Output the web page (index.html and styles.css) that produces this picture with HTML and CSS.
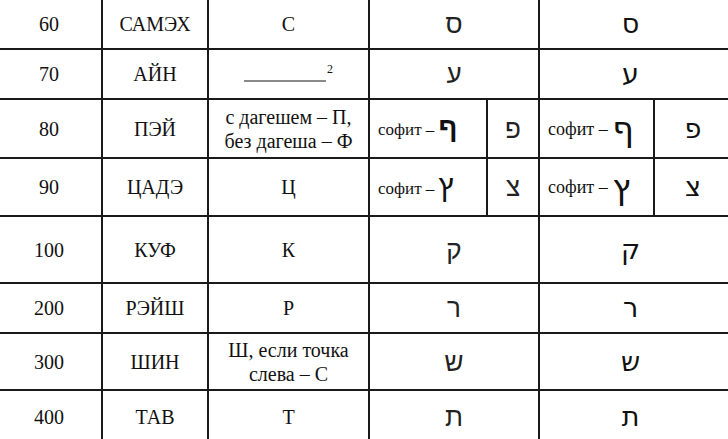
FILE: index.html
```html
<!DOCTYPE html>
<html lang="ru">
<head>
<meta charset="utf-8">
<title>Таблица букв</title>
<link rel="stylesheet" href="styles.css">
</head>
<body>
<table class="letters">
  <colgroup>
    <col class="c-num"><col class="c-name"><col class="c-ru"><col class="c-he-a"><col class="c-he-b"><col class="c-cu-a"><col class="c-cu-b">
  </colgroup>
  <tbody>
    <tr class="r1">
      <td>60</td><td>САМЭХ</td><td>С</td>
      <td colspan="2" class="he" lang="he">ס</td>
      <td colspan="2" class="cu wide" lang="he">ס</td>
    </tr>
    <tr class="r2">
      <td>70</td><td>АЙН</td>
      <td><span class="blank"></span><sup class="note">2</sup></td>
      <td colspan="2" class="he" lang="he">ע</td>
      <td colspan="2" class="cu wide" lang="he">ע</td>
    </tr>
    <tr class="r3">
      <td>80</td><td>ПЭЙ</td>
      <td class="two">с дагешем – П,<br>без дагеша – Ф</td>
      <td class="sofit">софит – <span class="he-big" lang="he">ף</span></td>
      <td class="he" lang="he">פ</td>
      <td class="sofit cs">софит – <span class="cu-big" lang="he">ף</span></td>
      <td class="cu" lang="he">פ</td>
    </tr>
    <tr class="r4">
      <td>90</td><td>ЦАДЭ</td><td>Ц</td>
      <td class="sofit">софит – <span class="he-big thin" lang="he">ץ</span></td>
      <td class="he" lang="he">צ</td>
      <td class="sofit cs">софит – <span class="cu-big" lang="he">ץ</span></td>
      <td class="cu" lang="he">צ</td>
    </tr>
    <tr class="r5">
      <td>100</td><td>КУФ</td><td>К</td>
      <td colspan="2" class="he" lang="he">ק</td>
      <td colspan="2" class="cu wide" lang="he">ק</td>
    </tr>
    <tr class="r6">
      <td>200</td><td>РЭЙШ</td><td>Р</td>
      <td colspan="2" class="he" lang="he">ר</td>
      <td colspan="2" class="cu wide" lang="he">ר</td>
    </tr>
    <tr class="r7">
      <td>300</td><td>ШИН</td>
      <td class="two">Ш, если точка<br>слева – С</td>
      <td colspan="2" class="he" lang="he">ש</td>
      <td colspan="2" class="cu wide" lang="he">ש</td>
    </tr>
    <tr class="r8">
      <td>400</td><td>ТАВ</td><td>Т</td>
      <td colspan="2" class="he" lang="he">ת</td>
      <td colspan="2" class="cu wide" lang="he">ת</td>
    </tr>
  </tbody>
</table>
</body>
</html>
```

FILE: styles.css
```css
html, body {
  margin: 0;
  padding: 0;
  background: #fff;
  overflow: hidden;
}

.letters {
  border-collapse: collapse;
  table-layout: fixed;
  width: 736px;
  margin: -2px 0 0 -5px;
  font-family: "Liberation Serif", "Times New Roman", serif;
  font-size: 20px;
  color: #111;
}

.c-num { width: 106px; }
.c-name { width: 106px; }
.c-ru { width: 161px; }
.c-he-a { width: 118px; }
.c-he-b { width: 52px; }
.c-cu-a { width: 115px; }
.c-cu-b { width: 78px; }

.letters td {
  border: 2px solid #1a1a1a;
  text-align: center;
  vertical-align: middle;
  padding: 0;
  line-height: 24px;
  white-space: nowrap;
}

.r1 { height: 50px; }
.r2 { height: 50px; }
.r3 { height: 59px; }
.r4 { height: 58px; }
.r5 { height: 67px; }
.r6 { height: 50px; }
.r7 { height: 57px; }
.r8 { height: 54px; }

.blank {
  display: inline-block;
  width: 82px;
  height: 2px;
  background: #8a8a8a;
  vertical-align: middle;
  margin-top: 10px;
}

.note {
  font-size: 12px;
  vertical-align: 8px;
  line-height: 0;
  margin-left: 1px;
}

.he {
  font-family: "Liberation Sans", "DejaVu Sans", sans-serif;
  font-size: 26px;
  color: #222;
}

.cu {
  font-family: "DejaVu Sans", sans-serif;
  font-size: 27px;
  color: #111;
}

.letters td.cu.wide {
  padding-right: 10px;
}

.letters td.sofit {
  text-align: left;
  padding-left: 8px;
  font-size: 17px;
}

.letters td.sofit.cs {
  font-size: 18px;
  padding-left: 8px;
}

.he-big {
  font-family: "Liberation Sans", "DejaVu Sans", sans-serif;
  font-size: 28px;
  font-weight: bold;
  vertical-align: -2px;
}

.he-big.thin {
  font-weight: normal;
  font-size: 30px;
}

.cu-big {
  font-family: "DejaVu Sans", sans-serif;
  font-size: 34px;
  vertical-align: -6px;
}
```
